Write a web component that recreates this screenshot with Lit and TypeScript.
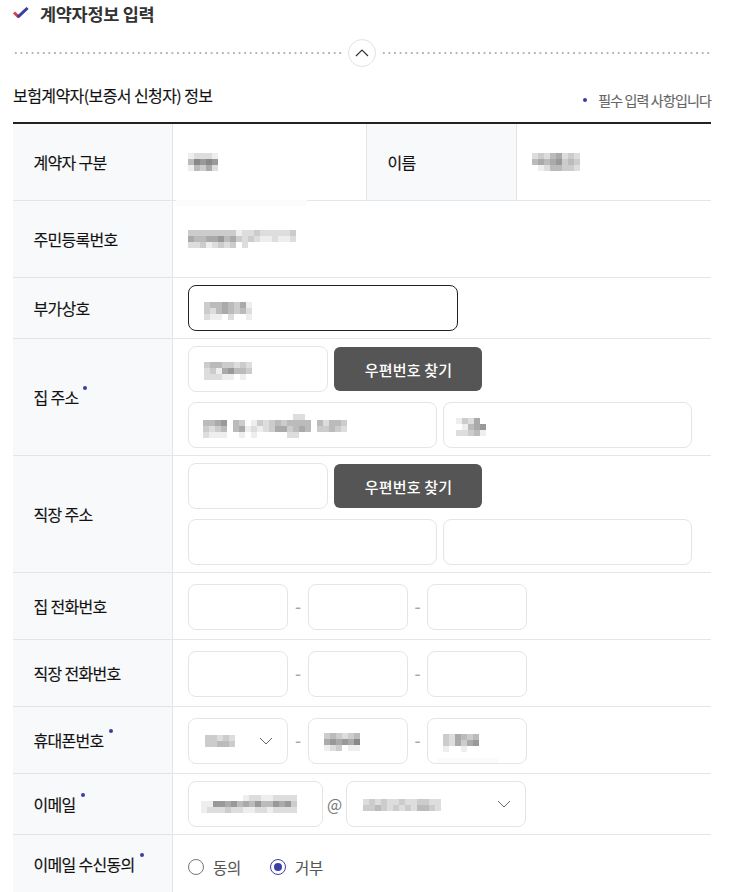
import { LitElement, html, css, svg } from "lit";
import { customElement } from "lit/decorators.js";

const CELL = 6;

function mosaic(rows: string[], dx = 0, dy = 0) {
  const w = rows[0].length * CELL;
  const h = rows.length * CELL;
  return html`<svg class="mosaic" width=${w} height=${h} viewBox="0 0 ${w} ${h}" style="margin-left:${dx}px;margin-top:${dy}px" shape-rendering="crispEdges">
    ${rows.map((r, y) =>
      [...r].map((c, x) => svg`<rect x=${x * CELL} y=${y * CELL} width=${CELL} height=${CELL} fill="#${c}${c}${c}"></rect>`)
    )}
  </svg>`;
}

const chevron = html`<svg class="chev" width="14" height="8" viewBox="0 0 14 8"><path d="M1 1l6 6 6-6" fill="none" stroke="#666" stroke-width="1"></path></svg>`;

@customElement("app-root")
export class AppRoot extends LitElement {
  static styles = css`
    :host {
      display: block;
      position: relative;
      width: 730px;
      height: 892px;
      overflow: hidden;
      background: #fff;
      box-sizing: border-box;
      padding: 0 19px 0 13px;
      font-family: "Noto Sans CJK KR", "Noto Sans", sans-serif;
      color: #222;
    }
    * { box-sizing: border-box; }
    .head {
      height: 26px;
      display: flex;
      align-items: center;
      gap: 11px;
      font-size: 17.5px;
      font-weight: 700;
      letter-spacing: -0.3px;
      color: #333;
    }
    .divider {
      margin-top: 13px;
      height: 28px;
      display: flex;
      align-items: center;
      gap: 5px;
    }
    .dots {
      flex: 1;
      height: 2px;
      background-image: radial-gradient(circle at center, #b5b5b5 0.9px, transparent 1.1px);
      background-size: 5.6px 2px;
      background-repeat: repeat-x;
    }
    .toggle {
      width: 28px;
      height: 28px;
      border-radius: 50%;
      border: 1px solid #e2e2e2;
      display: flex;
      align-items: center;
      justify-content: center;
      background: #fff;
    }
    .sub {
      height: 55px;
      display: flex;
      justify-content: space-between;
      padding-top: 17px;
    }
    .sub h3 {
      margin: 0;
      font-size: 16px;
      font-weight: 400;
      line-height: 22px;
      letter-spacing: -0.58px;
      color: #111;
      -webkit-text-stroke: 0.15px #111;
    }
    .note {
      display: flex;
      align-items: center;
      gap: 11px;
      height: 22px;
      margin-top: 5px;
      font-size: 14px;
      font-weight: 400;
      letter-spacing: -0.85px;
      color: #666;
      -webkit-text-stroke: 0.15px #666;
    }
    .bullet {
      width: 4px;
      height: 4px;
      border-radius: 50%;
      background: #3c3f9e;
      flex: none;
    }
    .table { border-top: 2px solid #222; }
    .row {
      display: grid;
      grid-template-columns: 160px 1fr;
      border-bottom: 1px solid #e5e5e5;
    }
    .row.four { grid-template-columns: 160px 193px 151px 1fr; }
    .h77 { height: 77px; }
    .th {
      background: #f8f9fb;
      border-right: 1px solid #e5e5e5;
      display: flex;
      align-items: center;
      padding-left: 20.5px;
      font-size: 16px;
      font-weight: 400;
      letter-spacing: -0.7px;
      color: #111;
      -webkit-text-stroke: 0.15px #111;
    }
    .th.mid { border-left: 1px solid #e5e5e5; }
    .label { position: relative; }
    .req::after {
      content: "";
      position: absolute;
      right: -9px;
      top: 1px;
      width: 4px;
      height: 4px;
      border-radius: 50%;
      background: #3c3f9e;
    }
    .td {
      padding: 7px 15px;
      display: flex;
      flex-direction: column;
      gap: 10px;
      justify-content: center;
    }
    .td.phone { padding: 11px 15px 9px; }
    .line { display: flex; align-items: center; gap: 6px; }
    .field {
      display: flex;
      align-items: flex-start;
      height: 46px;
      border: 1px solid #e5e5e5;
      border-radius: 8px;
      background: #fff;
      padding: 0;
      margin: 0;
      outline: none;
      flex: none;
    }
    .field.focus { border-color: #222; }
    .w270 { width: 270px; }
    .w140 { width: 140px; }
    .w249 { width: 249px; }
    .w100 { width: 100px; }
    .w135 { width: 135px; }
    .w180 { width: 180px; }
    .sel { position: relative; }
    .chev { position: absolute; right: 14px; top: 18px; }
    .btn {
      width: 148px;
      height: 44px;
      border: 0;
      border-radius: 6px;
      background: #555;
      color: #fff;
      font: 500 15px "Noto Sans CJK KR", sans-serif;
      letter-spacing: 0.2px;
      padding: 0 0 0 1px;
      flex: none;
    }
    .sep {
      flex: none;
      width: 20px;
      height: 24px;
      line-height: 22px;
      text-align: center;
      font-size: 17px;
      font-weight: 500;
      color: #a5a5a5;
    }
    .sep.short { width: 19px; }
    .line.tel { gap: 0; }
    .at {
      flex: none;
      width: 23px;
      text-align: center;
      font-size: 16px;
      color: #777;
    }
    .line.mail { gap: 0; }
    .mosaic { display: block; flex: none; }
    .radios {
      display: flex;
      gap: 29px;
      height: 58px;
      align-items: center;
      padding-top: 5px;
    }
    .radio {
      display: flex;
      align-items: center;
      gap: 9px;
      font-size: 15.5px;
      letter-spacing: -0.3px;
      color: #555;
      -webkit-text-stroke: 0.1px #555;
    }
    .dot {
      width: 16px;
      height: 16px;
      border-radius: 50%;
      border: 1px solid #777;
      display: flex;
      align-items: center;
      justify-content: center;
    }
    .dot.on { border-color: #3a3fa8; }
    .dot.on::after {
      content: "";
      width: 8px;
      height: 8px;
      border-radius: 50%;
      background: #3a3fa8;
    }
    .smudge {
      position: absolute;
      background: #fbfbfb;
    }
    .smudge.a { left: 176px; top: 200px; width: 131px; height: 6px; }
    .smudge.b { left: 437px; top: 758px; width: 61px; height: 5px; }
    .td.radio-cell { padding: 0 15px; justify-content: flex-start; }
  `;

  private th(label: string, req = false, mid = false) {
    return html`<div class="th ${mid ? "mid" : ""}"><span class="label ${req ? "req" : ""}">${label}</span></div>`;
  }

  render() {
    return html`
      <div class="head">
        <svg width="16" height="12" viewBox="0 0 16 12">
          <path d="M1 5.5l4.8 4.6" fill="none" stroke="#d8404a" stroke-width="3"></path>
          <path d="M4.8 10.2L14.6 1" fill="none" stroke="#3c3f9e" stroke-width="3"></path>
        </svg>
        <span>계약자정보 입력</span>
      </div>
      <div class="divider">
        <div class="dots"></div>
        <div class="toggle">
          <svg width="14" height="8" viewBox="0 0 14 8"><path d="M1 7l6-6 6 6" fill="none" stroke="#333" stroke-width="1.2"></path></svg>
        </div>
        <div class="dots"></div>
      </div>
      <div class="sub">
        <h3>보험계약자(보증서 신청자) 정보</h3>
        <div class="note"><span class="bullet"></span><span>필수 입력 사항입니다</span></div>
      </div>
      <div class="table">
        <div class="row four h77">
          ${this.th("계약자 구분")}
          <div class="td">${mosaic(["eddde", "b8989", "ebcad"])}</div>
          ${this.th("이름", false, true)}
          <div class="td">${mosaic(["dcdbadcd", "baba9cbc", "fedbbccd"])}</div>
        </div>
        <div class="row h77">
          ${this.th("주민등록번호")}
          <div class="td">${mosaic([
            "cccccccceddcdddddc",
            "abbaa9bacdcdeedeed",
            "ddcedcdcfdfffffff",
          ].map((r) => r.padEnd(18, "f")))}</div>
        </div>
        <div class="row">
          ${this.th("부가상호")}
          <div class="td">
            <div class="field focus w270">${mosaic(["cbbabcae", "cdbabcbd", "deefdffe"], 15, 16)}</div>
          </div>
        </div>
        <div class="row">
          ${this.th("집 주소", true)}
          <div class="td">
            <div class="line">
              <div class="field w140">${mosaic(["cbbccdcd", "dcea9bbc", "dddeefef"], 15, 15)}</div>
              <button class="btn">우편번호 찾기</button>
            </div>
            <div class="line">
              <div class="field w249">${mosaic([
                "fffffffffffffffddfffffff",
                "bba9fbcfecdcbcbbbbfbdbbc",
                "cdcbfbaededcaacbabfccbcd",
                "deeeffefefffffddffffffff",
              ], 14, 11)}</div>
              <div class="field w249">${mosaic(["ecdaf", "feba9", "ddcbe"], 12, 15)}</div>
            </div>
          </div>
        </div>
        <div class="row">
          ${this.th("직장 주소")}
          <div class="td">
            <div class="line">
              <input class="field w140" />
              <button class="btn">우편번호 찾기</button>
            </div>
            <div class="line">
              <input class="field w249" />
              <input class="field w249" />
            </div>
          </div>
        </div>
        <div class="row">
          ${this.th("집 전화번호")}
          <div class="td phone">
            <div class="line tel">
              <input class="field w100" /><span class="sep">-</span>
              <input class="field w100" /><span class="sep short">-</span>
              <input class="field w100" />
            </div>
          </div>
        </div>
        <div class="row">
          ${this.th("직장 전화번호")}
          <div class="td phone">
            <div class="line tel">
              <input class="field w100" /><span class="sep">-</span>
              <input class="field w100" /><span class="sep short">-</span>
              <input class="field w100" />
            </div>
          </div>
        </div>
        <div class="row">
          ${this.th("휴대폰번호", true)}
          <div class="td phone">
            <div class="line tel">
              <div class="field w100 sel">${mosaic(["ccdcd", "ccbbc"], 16, 16)}${chevron}</div>
              <span class="sep">-</span>
              <div class="field w100">${mosaic(["cbcdcb", "a9a9a8", "edcfee"], 15, 14)}</div>
              <span class="sep short">-</span>
              <div class="field w100">${mosaic(["cdabcb", "cdaca9", "effeff"], 15, 15)}</div>
            </div>
          </div>
        </div>
        <div class="row">
          ${this.th("이메일", true)}
          <div class="td">
            <div class="line mail">
              <div class="field w135">${mosaic([
                "fffffffeddeedddd",
                "ee99a9bab9bb9a9c",
                "edddcddeeddedddd",
              ], 12, 13)}</div>
              <span class="at">@</span>
              <div class="field w180 sel">${mosaic([
                "dcdcddcddccdd",
                "ccbcdcdcdbbcd",
              ], 16, 17)}${chevron}</div>
            </div>
          </div>
        </div>
        <div class="row">
          ${this.th("이메일 수신동의", true)}
          <div class="td radio-cell">
            <div class="radios">
              <span class="radio"><span class="dot"></span>동의</span>
              <span class="radio"><span class="dot on"></span>거부</span>
            </div>
          </div>
        </div>
      </div>
      <div class="smudge a"></div>
      <div class="smudge b"></div>
    `;
  }
}
